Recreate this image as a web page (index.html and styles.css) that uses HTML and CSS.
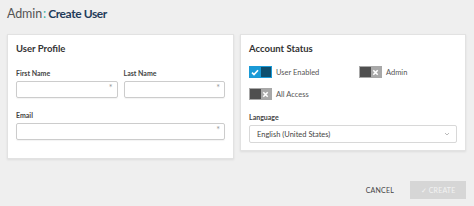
FILE: index.html
```html
<!DOCTYPE html>
<html lang="en">
<head>
    <meta charset="UTF-8">
    <meta name="viewport" content="width=device-width, initial-scale=1.0">
    <title>Create User</title>
    <link rel="stylesheet" href="styles.css">
</head>
<body>
    <div class="page">
        <h1 class="title"><span class="crumb">Admin</span><span class="sep">:</span><span class="current">Create User</span></h1>

        <div class="cards">
            <div class="card card-profile">
                <h2 class="card-title">User Profile</h2>
                <div class="row">
                    <div class="field">
                        <label>First Name</label>
                        <div class="input"><span class="req">*</span></div>
                    </div>
                    <div class="field">
                        <label>Last Name</label>
                        <div class="input"><span class="req">*</span></div>
                    </div>
                </div>
                <div class="field field-email">
                    <label>Email</label>
                    <div class="input"><span class="req">*</span></div>
                </div>
            </div>

            <div class="card card-status">
                <h2 class="card-title">Account Status</h2>
                <div class="toggles">
                    <div class="toggle-item">
                        <span class="toggle on">
                            <span class="mark">
                                <svg width="8" height="7" viewBox="0 0 8 7"><path d="M1 3.6 L3 5.6 L7 1.2" fill="none" stroke="#fff" stroke-width="1.6"/></svg>
                            </span>
                            <span class="knob"></span>
                        </span>
                        <span class="toggle-label">User Enabled</span>
                    </div>
                    <div class="toggle-item">
                        <span class="toggle off">
                            <span class="knob"></span>
                            <span class="mark">
                                <svg width="7" height="7" viewBox="0 0 7 7"><path d="M1.3 1.3 L5.7 5.7 M5.7 1.3 L1.3 5.7" fill="none" stroke="#fff" stroke-width="1.6"/></svg>
                            </span>
                        </span>
                        <span class="toggle-label">Admin</span>
                    </div>
                    <div class="toggle-item">
                        <span class="toggle off">
                            <span class="knob"></span>
                            <span class="mark">
                                <svg width="7" height="7" viewBox="0 0 7 7"><path d="M1.3 1.3 L5.7 5.7 M5.7 1.3 L1.3 5.7" fill="none" stroke="#fff" stroke-width="1.6"/></svg>
                            </span>
                        </span>
                        <span class="toggle-label">All Access</span>
                    </div>
                </div>
                <div class="field">
                    <label>Language</label>
                    <div class="select">
                        <span>English (United States)</span>
                        <svg width="6" height="4" viewBox="0 0 6 4"><path d="M1 1 L3 3 L5 1" fill="none" stroke="#aaa" stroke-width="0.8"/></svg>
                    </div>
                </div>
            </div>
        </div>

        <div class="actions">
            <button class="btn btn-cancel">CANCEL</button>
            <button class="btn btn-create">&#10003; CREATE</button>
        </div>
    </div>
</body>
</html>
```

FILE: styles.css
```css
* {
    margin: 0;
    padding: 0;
    box-sizing: border-box;
}

body {
    background: #efefef;
    font-family: Lato, "Open Sans", "Liberation Sans", sans-serif;
    color: #333;
    width: 474px;
    height: 206px;
    overflow: hidden;
}

.page {
    padding: 5px 8px 0 7px;
}

.title {
    font-size: 12.5px;
    font-weight: 400;
    height: 28px;
    line-height: 18px;
    letter-spacing: -0.1px;
}

.crumb {
    color: #555;
}

.sep {
    color: #36b0a0;
    margin: 0 2px 0 1px;
}

.current {
    color: #1f3b5a;
    font-size: 12px;
    font-weight: 700;
    letter-spacing: -0.4px;
}

.cards {
    display: flex;
    align-items: flex-start;
    gap: 6px;
    margin-top: 1px;
}

.card {
    background: #fff;
    border: 1px solid #e2e2e2;
    box-shadow: 0 1px 2px rgba(0, 0, 0, 0.08);
    padding: 8px 8px 0 8px;
}

.card-profile {
    width: 227px;
    height: 125px;
}

.card-status {
    width: 226px;
    height: 117px;
}

.card-title {
    font-size: 9.5px;
    font-weight: 700;
    color: #333;
    line-height: 12px;
    margin-bottom: 14px;
}

.row {
    display: flex;
    gap: 6px;
}

.row .field {
    flex: 1;
}

.field label {
    display: block;
    font-size: 7px;
    font-weight: 700;
    color: #444;
    line-height: 9px;
    margin-bottom: 3px;
}

.field-email {
    margin-top: 13px;
}

.input {
    height: 17px;
    border: 1px solid #ccc;
    border-radius: 2px;
    position: relative;
    box-shadow: 0 1px 1px rgba(0, 0, 0, 0.05);
}

.req {
    position: absolute;
    right: 4px;
    top: 0;
    font-size: 9px;
    color: #999;
}

.toggles {
    display: grid;
    grid-template-columns: 110px 1fr;
    row-gap: 10px;
    margin-top: -3px;
    margin-bottom: 13px;
}

.toggle-item {
    display: flex;
    align-items: center;
    gap: 4px;
}

.toggle {
    display: flex;
    width: 23px;
    height: 12px;
    padding: 1px;
}

.toggle .knob,
.toggle .mark {
    width: 10.5px;
    height: 10px;
    display: flex;
    align-items: center;
    justify-content: center;
}

.toggle.on {
    background: #1a9ad6;
}

.toggle.on .knob {
    background: #0e4f6e;
}

.toggle.off {
    background: #a8a8a8;
}

.toggle.off .knob {
    background: #4f4f4f;
}

.toggle-label {
    font-size: 7.5px;
    color: #555;
}

.select {
    height: 18px;
    border: 1px solid #d8d8d8;
    border-radius: 2px;
    display: flex;
    align-items: center;
    justify-content: space-between;
    padding: 0 6px 0 7px;
    font-size: 7.5px;
    color: #444;
}

.actions {
    display: flex;
    justify-content: flex-end;
    align-items: center;
    gap: 16px;
    margin-top: 22px;
}

.btn {
    border: none;
    font-family: inherit;
    font-size: 7px;
    letter-spacing: 0.2px;
}

.btn-cancel {
    background: none;
    color: #444;
}

.btn-create {
    background: #d6d6d6;
    color: #f3f3f3;
    width: 56px;
    height: 18px;
}
```
